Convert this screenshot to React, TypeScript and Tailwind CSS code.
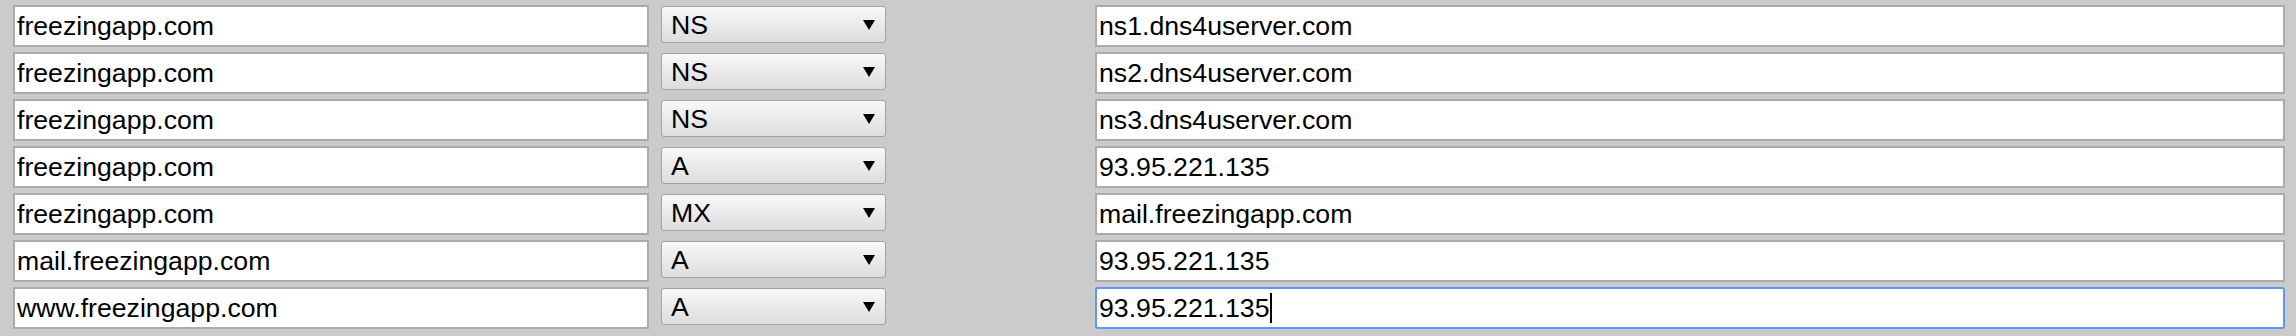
import React from 'react';

type DnsRecord = {
  host: string;
  type: string;
  value: string;
  focused?: boolean;
};

const records: DnsRecord[] = [
  { host: 'freezingapp.com', type: 'NS', value: 'ns1.dns4userver.com' },
  { host: 'freezingapp.com', type: 'NS', value: 'ns2.dns4userver.com' },
  { host: 'freezingapp.com', type: 'NS', value: 'ns3.dns4userver.com' },
  { host: 'freezingapp.com', type: 'A', value: '93.95.221.135' },
  { host: 'freezingapp.com', type: 'MX', value: 'mail.freezingapp.com' },
  { host: 'mail.freezingapp.com', type: 'A', value: '93.95.221.135' },
  { host: 'www.freezingapp.com', type: 'A', value: '93.95.221.135', focused: true },
];

function TextField({ value, width, focused }: { value: string; width: string; focused?: boolean }) {
  return (
    <div
      className={`${width} h-[42px] shrink-0 flex items-center bg-white px-[2px] border-2 whitespace-nowrap overflow-hidden ${
        focused ? 'border-[#5b98fa] rounded-[3px]' : 'border-[#ababab]'
      }`}
    >
      <span>{value}</span>
      {focused && <span className="inline-block w-[2px] h-[30px] bg-black ml-[1px]" />}
    </div>
  );
}

function TypeSelect({ value }: { value: string }) {
  return (
    <div className="w-[225px] h-[37px] mt-[1px] shrink-0 flex items-center justify-between pl-[9px] pr-[10px] border border-[#a3a3a3] rounded-[3px] bg-gradient-to-b from-[#f8f8f8] to-[#dddddd]">
      <span>{value}</span>
      <svg width="12" height="10" viewBox="0 0 12 10">
        <path d="M0 0 H12 L6 10 Z" fill="#000" />
      </svg>
    </div>
  );
}

export default function App() {
  return (
    <div className="w-[2296px] h-[336px] bg-[#cbcbcb] pt-[5px] pl-[13px] flex flex-col gap-[5px] text-black text-[26.67px] font-['Liberation_Sans',Arial,sans-serif]">
      {records.map((r, i) => (
        <div key={i} className="flex items-start">
          <TextField value={r.host} width="w-[636px]" />
          <div className="ml-[12px]">
            <TypeSelect value={r.type} />
          </div>
          <div className="ml-[209px]">
            <TextField value={r.value} width="w-[1190px]" focused={r.focused} />
          </div>
        </div>
      ))}
    </div>
  );
}
